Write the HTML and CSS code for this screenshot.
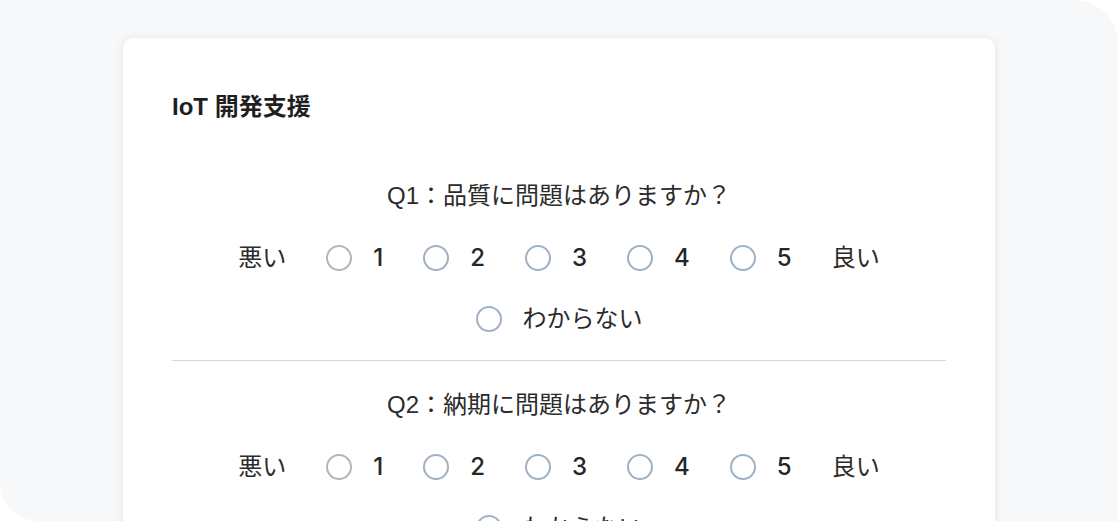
FILE: index.html
```html
<!DOCTYPE html>
<html lang="ja">
<head>
<meta charset="utf-8">
<title>IoT 開発支援</title>
<link rel="stylesheet" href="styles.css">
</head>
<body>
<div class="frame">
  <div class="card">
    <h1 class="title">IoT 開発支援</h1>

    <section class="question">
      <p class="q-text">Q1：品質に問題はありますか？</p>
      <div class="scale">
        <span class="end">悪い</span>
        <label class="opt"><input type="radio" name="q1" class="radio radio-muted"><span class="num">1</span></label>
        <label class="opt"><input type="radio" name="q1" class="radio"><span class="num">2</span></label>
        <label class="opt"><input type="radio" name="q1" class="radio"><span class="num">3</span></label>
        <label class="opt"><input type="radio" name="q1" class="radio"><span class="num">4</span></label>
        <label class="opt"><input type="radio" name="q1" class="radio"><span class="num">5</span></label>
        <span class="end">良い</span>
      </div>
      <label class="opt"><input type="radio" name="q1" class="radio"><span class="label">わからない</span></label>
    </section>

    <section class="question">
      <p class="q-text">Q2：納期に問題はありますか？</p>
      <div class="scale">
        <span class="end">悪い</span>
        <label class="opt"><input type="radio" name="q2" class="radio radio-muted"><span class="num">1</span></label>
        <label class="opt"><input type="radio" name="q2" class="radio"><span class="num">2</span></label>
        <label class="opt"><input type="radio" name="q2" class="radio"><span class="num">3</span></label>
        <label class="opt"><input type="radio" name="q2" class="radio"><span class="num">4</span></label>
        <label class="opt"><input type="radio" name="q2" class="radio"><span class="num">5</span></label>
        <span class="end">良い</span>
      </div>
      <label class="opt"><input type="radio" name="q2" class="radio"><span class="label">わからない</span></label>
    </section>
  </div>
</div>
</body>
</html>
```

FILE: styles.css
```css
html, body {
  margin: 0;
  padding: 0;
  background: #ffffff;
}

body {
  font-family: "Liberation Sans", "Noto Sans CJK JP", sans-serif;
  color: #2b2b2b;
}

.frame {
  width: 1118px;
  height: 521px;
  box-sizing: border-box;
  padding: 38px 123px 0;
  background: #f6f8fa;
  border-radius: 0 44px 0 38px;
  overflow: hidden;
}

.card {
  background: #ffffff;
  border-radius: 10px;
  box-shadow: 0 1px 10px rgba(0, 0, 0, 0.09);
  padding: 49px 49px 40px;
  min-height: 600px;
  box-sizing: border-box;
}

.title {
  margin: 0 0 25px;
  font-size: 24px;
  line-height: 40px;
  font-weight: 700;
  color: #1f1f1f;
}

.question {
  display: flex;
  flex-direction: column;
  align-items: center;
  gap: 25px;
  padding: 26px 0 23px;
  border-bottom: 1px solid #cfdae5;
}

.q-text {
  margin: 0 0 1px;
  font-size: 24px;
  line-height: 36px;
}

.scale {
  display: flex;
  align-items: center;
  gap: 40px;
  font-size: 24px;
  line-height: 36px;
}

.opt {
  display: flex;
  align-items: center;
  gap: 21px;
  font-size: 24px;
  line-height: 36px;
}

.num {
  font-family: Inter, "Liberation Sans", sans-serif;
  font-weight: 500;
  color: #262626;
}

.label {
  color: #2b2b2b;
}

.radio {
  appearance: none;
  -webkit-appearance: none;
  margin: 0;
  width: 26px;
  height: 26px;
  border: 2px solid #a0b1c6;
  border-radius: 50%;
  background: #ffffff;
  box-sizing: border-box;
  flex: none;
}

.radio-muted {
  border-color: #b2b5b9;
}
```
